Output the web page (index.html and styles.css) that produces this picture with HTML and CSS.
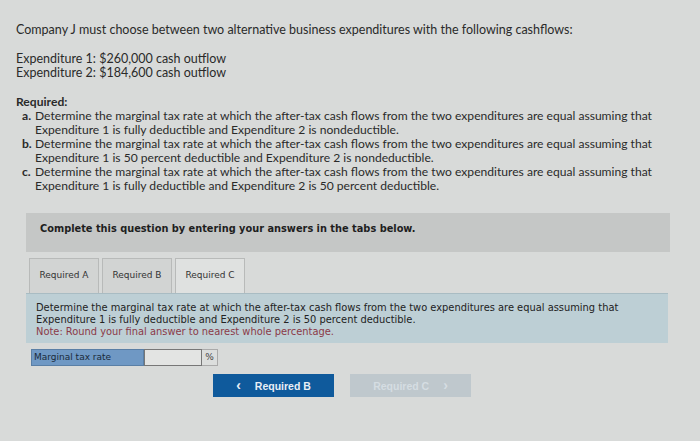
FILE: index.html
```html
<!DOCTYPE html>
<html>
<head>
<meta charset="utf-8">
<link rel="stylesheet" href="styles.css">
</head>
<body>
<div class="page">
  <p class="intro">Company J must choose between two alternative business expenditures with the following cashflows:</p>
  <div class="exps">
    <div>Expenditure 1: $260,000 cash outflow</div>
    <div>Expenditure 2: $184,600 cash outflow</div>
  </div>
  <div class="req">
    <div class="req-title">Required:</div>
    <ol class="req-list">
      <li><span class="lbl">a.</span><span>Determine the marginal tax rate at which the after-tax cash flows from the two expenditures are equal assuming that Expenditure 1 is fully deductible and Expenditure 2 is nondeductible.</span></li>
      <li><span class="lbl">b.</span><span>Determine the marginal tax rate at which the after-tax cash flows from the two expenditures are equal assuming that Expenditure 1 is 50 percent deductible and Expenditure 2 is nondeductible.</span></li>
      <li><span class="lbl">c.</span><span>Determine the marginal tax rate at which the after-tax cash flows from the two expenditures are equal assuming that Expenditure 1 is fully deductible and Expenditure 2 is 50 percent deductible.</span></li>
    </ol>
  </div>
  <div class="complete">Complete this question by entering your answers in the tabs below.</div>
  <div class="tabs">
    <div class="tab">Required A</div>
    <div class="tab">Required B</div>
    <div class="tab active">Required C</div>
  </div>
  <div class="panel">
    <div>Determine the marginal tax rate at which the after-tax cash flows from the two expenditures are equal assuming that Expenditure 1 is fully deductible and Expenditure 2 is 50 percent deductible.</div>
    <div class="note">Note: Round your final answer to nearest whole percentage.</div>
  </div>
  <div class="answer">
    <div class="ans-label">Marginal tax rate</div>
    <div class="ans-input"></div>
    <div class="ans-unit">%</div>
  </div>
  <div class="nav">
    <div class="btn prev"><span class="chev">&lsaquo;</span>Required B</div>
    <div class="btn next">Required C<span class="chev">&rsaquo;</span></div>
  </div>
</div>
</body>
</html>
```
FILE: styles.css
```css
html, body {
  margin: 0;
  padding: 0;
  background: #d8dad9;
}
.page {
  width: 700px;
  height: 441px;
  box-sizing: border-box;
  padding: 22px 0 0 16px;
  font-family: "Lato", "Open Sans", sans-serif;
  color: #2a2a2a;
  overflow: hidden;
}
.intro {
  margin: 0;
  font-size: 12.5px;
  line-height: 15px;
}
.exps {
  margin-top: 15px;
  font-size: 12.5px;
  line-height: 14px;
}
.req {
  margin-top: 15px;
  font-size: 12.1px;
  line-height: 14px;
}
.req-title {
  font-weight: bold;
}
.req-list {
  list-style: none;
  margin: 0;
  padding: 0 0 0 6px;
  width: 660px;
}
.req-list li {
  display: flex;
}
.req-list .lbl {
  font-weight: bold;
  width: 13px;
  flex: none;
}
.complete {
  margin: 20px 0 0 10px;
  width: 644px;
  height: 39px;
  box-sizing: border-box;
  background: #c5c7c6;
  padding: 10px 0 0 14px;
  font-family: "DejaVu Sans", sans-serif;
  font-weight: bold;
  font-size: 9.8px;
  color: #1e1e1e;
}
.tabs {
  display: flex;
  gap: 3px;
  margin: 6px 0 0 13px;
  height: 35px;
}
.tab {
  width: 70px;
  box-sizing: border-box;
  border: 1px solid #b8bab9;
  border-bottom: none;
  background: #d2d4d3;
  font-family: "DejaVu Sans", sans-serif;
  font-size: 9px;
  color: #333;
  display: flex;
  align-items: center;
  justify-content: center;
  padding-bottom: 2px;
}
.tab.active {
  background: #dfe1e0;
}
.panel {
  margin-left: 10px;
  width: 642px;
  height: 50px;
  box-sizing: border-box;
  background: #bdcfd5;
  border-top: 1px solid #a9bcc3;
  padding: 8px 20px 0 10px;
  font-family: "DejaVu Sans", sans-serif;
  font-size: 9.9px;
  line-height: 12px;
  color: #222;
}
.note {
  color: #8b3a48;
}
.answer {
  display: flex;
  margin: 6px 0 0 15px;
  height: 17px;
  font-family: "DejaVu Sans", sans-serif;
  font-size: 9px;
}
.ans-label {
  width: 113px;
  background: #6f98c4;
  border: 1px solid #5a7fa6;
  box-sizing: border-box;
  color: #1a2a3a;
  padding: 2px 0 0 2px;
}
.ans-input {
  width: 58px;
  background: #e3e4e3;
  border: 1px solid #777;
  box-sizing: border-box;
}
.ans-unit {
  width: 16px;
  background: #dcdedd;
  border: 1px solid #aaa;
  border-left: none;
  box-sizing: border-box;
  text-align: center;
  padding-top: 2px;
  color: #444;
}
.nav {
  display: flex;
  gap: 16px;
  margin: 8px 0 0 197px;
}
.btn {
  width: 121px;
  height: 23px;
  display: flex;
  align-items: center;
  justify-content: center;
  font-family: "Liberation Sans", "Open Sans", sans-serif;
  font-weight: bold;
  font-size: 10.5px;
  box-sizing: border-box;
}
.btn.prev {
  background: #0f5a9c;
  color: #e8eef5;
}
.btn.next {
  background: #bfc8cd;
  color: #d5dde2;
}
.chev {
  font-size: 14px;
  font-weight: bold;
  margin: -2px 14px 0 0;
}
.btn.next .chev {
  margin: -2px 0 0 14px;
}
```
